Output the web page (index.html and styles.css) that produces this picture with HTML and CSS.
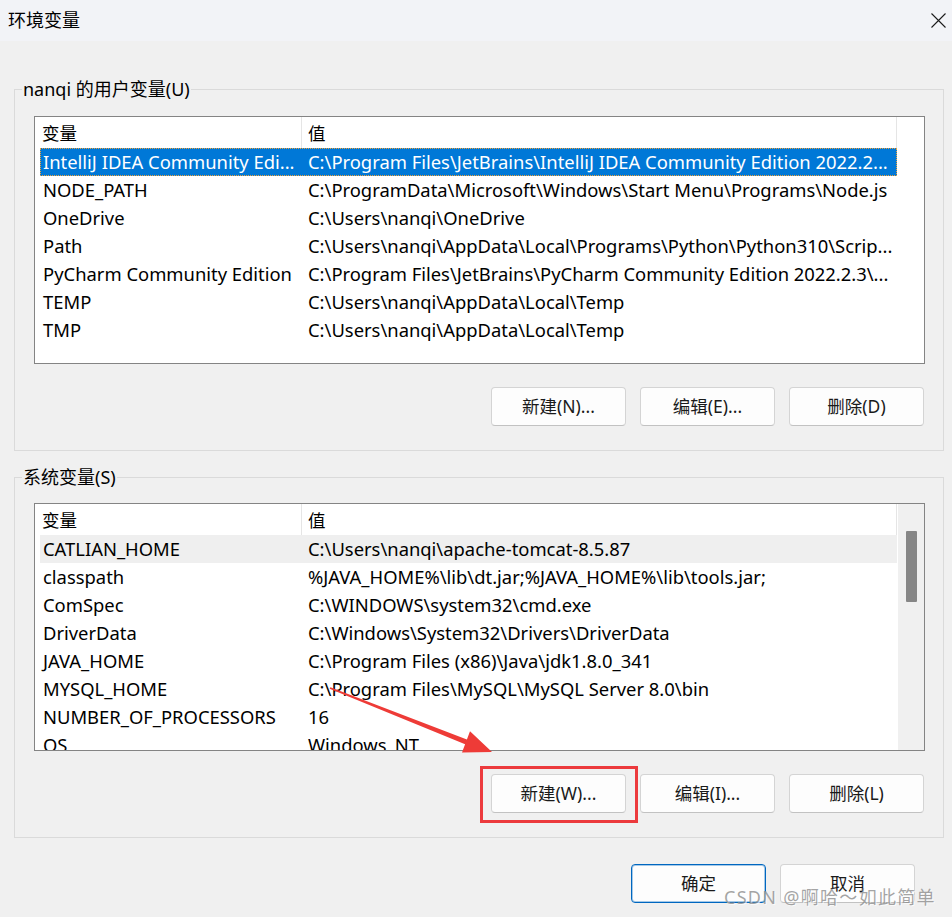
FILE: index.html
```html
<!DOCTYPE html>
<html lang="zh-CN">
<head>
<meta charset="utf-8">
<title>环境变量</title>
<link rel="stylesheet" href="styles.css">
</head>
<body>
<div class="window">
  <div class="titlebar">
    <span class="title">环境变量</span>
    <svg class="close" width="15" height="15" viewBox="0 0 15 15"><path d="M0.5 0.5 L14.5 14.5 M14.5 0.5 L0.5 14.5" stroke="#1b1b1b" stroke-width="1.1" fill="none"/></svg>
  </div>

  <fieldset class="group group-user">
    <legend>nanqi 的用户变量(U)</legend>
    <div class="list list-user">
      <div class="list-main">
        <div class="list-head"><div class="hcell c1">变量</div><div class="hcell c2">值</div></div>
        <div class="row selected"><div class="cell c1">IntelliJ IDEA Community Edi...</div><div class="cell c2">C:\Program Files\JetBrains\IntelliJ IDEA Community Edition 2022.2...</div></div>
        <div class="row"><div class="cell c1">NODE_PATH</div><div class="cell c2">C:\ProgramData\Microsoft\Windows\Start Menu\Programs\Node.js</div></div>
        <div class="row"><div class="cell c1">OneDrive</div><div class="cell c2">C:\Users\nanqi\OneDrive</div></div>
        <div class="row"><div class="cell c1">Path</div><div class="cell c2">C:\Users\nanqi\AppData\Local\Programs\Python\Python310\Scrip...</div></div>
        <div class="row"><div class="cell c1">PyCharm Community Edition</div><div class="cell c2">C:\Program Files\JetBrains\PyCharm Community Edition 2022.2.3\...</div></div>
        <div class="row"><div class="cell c1">TEMP</div><div class="cell c2">C:\Users\nanqi\AppData\Local\Temp</div></div>
        <div class="row"><div class="cell c1">TMP</div><div class="cell c2">C:\Users\nanqi\AppData\Local\Temp</div></div>
      </div>
    </div>
    <div class="buttons">
      <button class="btn">新建(N)...</button>
      <button class="btn">编辑(E)...</button>
      <button class="btn">删除(D)</button>
    </div>
  </fieldset>

  <fieldset class="group group-system">
    <legend>系统变量(S)</legend>
    <div class="list list-system">
      <div class="list-main">
        <div class="list-head"><div class="hcell c1">变量</div><div class="hcell c2">值</div></div>
        <div class="row hover"><div class="cell c1">CATLIAN_HOME</div><div class="cell c2">C:\Users\nanqi\apache-tomcat-8.5.87</div></div>
        <div class="row"><div class="cell c1">classpath</div><div class="cell c2">%JAVA_HOME%\lib\dt.jar;%JAVA_HOME%\lib\tools.jar;</div></div>
        <div class="row"><div class="cell c1">ComSpec</div><div class="cell c2">C:\WINDOWS\system32\cmd.exe</div></div>
        <div class="row"><div class="cell c1">DriverData</div><div class="cell c2">C:\Windows\System32\Drivers\DriverData</div></div>
        <div class="row"><div class="cell c1">JAVA_HOME</div><div class="cell c2">C:\Program Files (x86)\Java\jdk1.8.0_341</div></div>
        <div class="row"><div class="cell c1">MYSQL_HOME</div><div class="cell c2">C:\Program Files\MySQL\MySQL Server 8.0\bin</div></div>
        <div class="row"><div class="cell c1">NUMBER_OF_PROCESSORS</div><div class="cell c2">16</div></div>
        <div class="row"><div class="cell c1">OS</div><div class="cell c2">Windows_NT</div></div>
      </div>
      <div class="scrollbar"><div class="thumb"></div></div>
    </div>
    <div class="buttons">
      <div class="btn-wrap">
        <button class="btn">新建(W)...</button>
        <div class="highlight-box"></div>
      </div>
      <button class="btn">编辑(I)...</button>
      <button class="btn">删除(L)</button>
    </div>
  </fieldset>

  <div class="footer">
    <button class="btn btn-default">确定</button>
    <button class="btn">取消</button>
  </div>

  <svg class="annotation" width="952" height="917" viewBox="0 0 952 917">
    <polygon points="329.6,688.8 465.1,744.3 462,752.5 492,752 470,731.3 466.9,739.4 330.4,687.2" fill="#ee3b37"/>
  </svg>

  <div class="watermark">CSDN @啊哈～如此简单</div>
</div>
</body>
</html>
```

FILE: styles.css
```css
* {
  box-sizing: border-box;
}

html, body {
  margin: 0;
  padding: 0;
}

body {
  width: 952px;
  height: 917px;
  background: #f0f0f0;
  font-family: "Noto Sans", "Noto Sans CJK SC", sans-serif;
  color: #000;
  overflow: hidden;
}

.window {
  position: relative;
  width: 952px;
  height: 917px;
  background: #f0f0f0;
}

.titlebar {
  height: 41px;
  background: #f2f3f7;
  display: flex;
  align-items: center;
  justify-content: space-between;
  padding: 0 6px 4px 8px;
}

.title {
  font-family: "Noto Sans CJK SC", sans-serif;
  font-size: 18px;
  line-height: 24px;
  color: #000;
}

.close {
  display: block;
  margin-top: 3px;
}

.group {
  margin: 0 8px 0 14px;
  padding: 0 18px 24px 19px;
  border: 1px solid #dadada;
  min-width: 0;
}

.group-user {
  margin-top: 36px;
}

.group-system {
  margin-top: 14px;
}

.group legend {
  font-family: "Noto Sans", "Noto Sans CJK SC", sans-serif;
  font-size: 18px;
  line-height: 24px;
  margin-left: -12px;
  padding: 0 1px;
  color: #000;
}

.list {
  width: 891px;
  height: 248px;
  border: 1px solid #848484;
  background: #fff;
  display: flex;
  overflow: hidden;
}

.list-user {
  margin-top: 15px;
}

.list-system {
  margin-top: 14px;
}

.list-main {
  width: 863px;
  flex: none;
  overflow: hidden;
}

.list-head {
  display: flex;
  height: 31px;
}

.hcell {
  height: 31px;
  line-height: 30px;
  font-size: 17.5px;
  font-family: "Noto Sans CJK SC", sans-serif;
  border-right: 1px solid #e5e5e5;
  padding-top: 1px;
}

.hcell.c1 {
  width: 267px;
  padding-left: 7px;
}

.hcell.c2 {
  width: 595px;
  padding-left: 6px;
}

.row {
  display: flex;
  margin-left: 5px;
  width: 857px;
  height: 28px;
  line-height: 28px;
  font-size: 18.4px;
  white-space: nowrap;
}

.cell {
  overflow: hidden;
  white-space: nowrap;
}

.cell.c1 {
  width: 262px;
  padding-left: 3px;
}

.cell.c2 {
  width: 595px;
  padding-left: 6px;
}

.row.selected {
  background: #0078d7;
  color: #fff;
  outline: 1px dotted #f0a23a;
  outline-offset: -1px;
}

.row.hover {
  background: #efefef;
}

.scrollbar {
  flex: 1;
  background: #f0f0f0;
  padding: 27px 7px 0 8px;
}

.thumb {
  width: 11px;
  height: 71px;
  background: #868686;
  border-radius: 1px;
}

.buttons {
  display: flex;
  justify-content: flex-end;
  gap: 14px;
  margin-top: 23px;
  width: 890px;
}

.btn {
  width: 135px;
  height: 39px;
  margin: 0;
  padding: 0;
  background: #fdfdfd;
  border: 1px solid #d4d4d4;
  border-bottom-color: #c2c2c2;
  border-radius: 4px;
  font-family: "Noto Sans", "Noto Sans CJK SC", sans-serif;
  font-size: 17.5px;
  color: #1a1a1a;
  line-height: 37px;
  text-align: center;
}

.btn-wrap {
  position: relative;
  display: flex;
}

.highlight-box {
  position: absolute;
  left: -11px;
  right: -12px;
  top: -8px;
  bottom: -10px;
  border: 3px solid #ec3a3d;
}

.footer {
  display: flex;
  justify-content: flex-end;
  gap: 14px;
  margin-top: 26px;
  padding-right: 37px;
}

.btn-default {
  border: 1px solid #0067c0;
  box-shadow: inset 0 0 0 1px rgba(0, 103, 192, 0.35);
}

.annotation {
  position: absolute;
  left: 0;
  top: 0;
  pointer-events: none;
}

.watermark {
  position: absolute;
  left: 724px;
  top: 884px;
  font-family: "Noto Sans", "Noto Sans CJK SC", sans-serif;
  font-size: 18px;
  line-height: 26px;
  letter-spacing: 1.3px;
  color: rgba(140, 140, 140, 0.78);
  text-shadow: 1px 1px 0 rgba(255, 255, 255, 0.7);
  white-space: nowrap;
}
```
